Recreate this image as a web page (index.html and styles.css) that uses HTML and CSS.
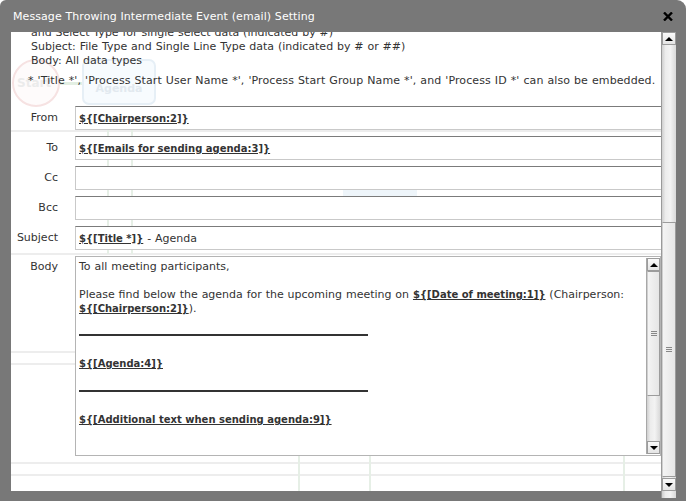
FILE: index.html
```html
<!DOCTYPE html>
<html>
<head>
<meta charset="utf-8">
<link rel="stylesheet" href="styles.css">
</head>
<body>
<div class="dialog">
  <div class="titlebar">
    <span class="title">Message Throwing Intermediate Event (email) Setting</span>
    <svg class="close" width="10" height="9" viewBox="0 0 10 9"><path d="M1 0.5 L9 8.5 M9 0.5 L1 8.5" stroke="#000" stroke-width="2.4" fill="none"/></svg>
  </div>
  <div class="content">
    <div class="main">
      <div class="backdrop">
        <div class="bd-circle"><span>Start</span></div>
        <div class="bd-arrow"></div>
        <div class="bd-box"><span>Agenda</span></div>
        <div class="bd-hline l1"></div>
        <div class="bd-hline l2"></div>
        <div class="bd-hline l3"></div>
        <div class="bd-hline l4"></div>
        <div class="bd-hline l5"></div>
        <div class="bd-hline l6"></div>
        <div class="bd-vline v1"></div>
        <div class="bd-vline v2"></div>
        <div class="bd-vline v3"></div>
        <div class="bd-vline v4"></div>
        <div class="bd-vline v5"></div>
        <div class="bd-minibox"></div>
      </div>
      <div class="scroller">
        <div class="help">
          <div class="help-line">and Select Type for single select data (indicated by #)</div>
          <div class="help-line">Subject: File Type and Single Line Type data (indicated by # or ##)</div>
          <div class="help-line">Body: All data types</div>
          <div class="help-note">* 'Title *', 'Process Start User Name *', 'Process Start Group Name *', and 'Process ID *' can also be embedded.</div>
        </div>
        <div class="form">
          <div class="label">From</div>
          <div class="field"><span class="token">${[Chairperson:2]}</span></div>
          <div class="label">To</div>
          <div class="field"><span class="token">${[Emails for sending agenda:3]}</span></div>
          <div class="label">Cc</div>
          <div class="field"></div>
          <div class="label">Bcc</div>
          <div class="field"></div>
          <div class="label">Subject</div>
          <div class="field"><span class="token">${[Title *]}</span>&nbsp;- Agenda</div>
          <div class="label label-top">Body</div>
          <div class="textarea">
            <div class="ta-text">
              <div class="ta-line">To all meeting participants,</div>
              <div class="ta-line">&nbsp;</div>
              <div class="ta-line">Please find below the agenda for the upcoming meeting on <span class="token">${[Date of meeting:1]}</span> (Chairperson:</div>
              <div class="ta-line"><span class="token">${[Chairperson:2]}</span>).</div>
              <div class="ta-rule"></div>
              <div class="ta-line"><span class="token">${[Agenda:4]}</span></div>
              <div class="ta-rule"></div>
              <div class="ta-line"><span class="token">${[Additional text when sending agenda:9]}</span></div>
            </div>
            <div class="sb inner">
              <div class="sb-btn"><span class="tri up"></span></div>
              <div class="sb-thumb"><span class="grip"></span></div>
              <div class="sb-fill"></div>
              <div class="sb-btn"><span class="tri down"></span></div>
            </div>
          </div>
        </div>
      </div>
    </div>
    <div class="sb outer">
      <div class="sb-btn"><span class="tri up"></span></div>
      <div class="sb-gap"></div>
      <div class="sb-thumb"><span class="grip"></span></div>
      <div class="sb-fill"></div>
      <div class="sb-btn"><span class="tri down"></span></div>
      <div class="sb-tail"></div>
    </div>
  </div>
</div>
</body>
</html>
```
FILE: styles.css
```css
* { box-sizing: border-box; }
body {
  margin: 0;
  background: #ffffff;
  font-family: "DejaVu Sans", Verdana, sans-serif;
  font-size: 11px;
  word-spacing: 0.37px;
  color: #333;
}
.dialog {
  width: 686px;
  height: 501px;
  background: #787878;
  border-radius: 6px 9px 0 0;
  display: flex;
  flex-direction: column;
  overflow: hidden;
}
.titlebar {
  height: 32px;
  flex: none;
  display: flex;
  align-items: center;
  justify-content: space-between;
  padding: 1px 13px 0 13px;
  color: #fff;
  font-size: 11px;
  word-spacing: 0.1px;
  letter-spacing: 0.08px;
}
.close { display: block; }
.content {
  display: flex;
  align-items: flex-start;
  padding: 0 10px 0 11px;
  height: 469px;
}
.main {
  width: 650px;
  height: 459px;
  flex: none;
  background: #fff;
  position: relative;
  overflow: hidden;
}
.backdrop { position: absolute; inset: 0; }
.bd-circle {
  position: absolute;
  left: 1px; top: 27px;
  width: 48px; height: 48px;
  border-radius: 50%;
  border: 2px solid #f6e2e2;
  background: #fefbfb;
  display: flex; align-items: center; justify-content: flex-start;
  padding-left: 3px;
  color: #ebebeb; font-weight: bold; font-size: 12px;
}
.bd-arrow {
  position: absolute;
  left: 49px; top: 50px;
  width: 22px; height: 3px;
  background: #e3efe3;
}
.bd-box {
  position: absolute;
  left: 71px; top: 27px;
  width: 74px; height: 46px;
  border: 2px solid #e6eff6;
  border-radius: 7px;
  background: #f7fbfe;
  display: flex; flex-direction: column; align-items: center; justify-content: flex-end;
  padding-bottom: 7px;
  color: #e2e9ef; font-weight: bold; font-size: 11px; line-height: 14px;
}
.bd-hline { position: absolute; left: 0; right: 0; height: 2px; background: #ededed; }
.bd-hline.l1 { top: 98px; }
.bd-hline.l2 { top: 221px; }
.bd-hline.l3 { top: 319px; }
.bd-hline.l4 { top: 331px; }
.bd-hline.l5 { top: 430px; }
.bd-hline.l6 { top: 442px; }
.bd-vline { position: absolute; width: 2px; background: #e6efe6; }
.bd-vline.v1 { left: 96px; top: 98px; height: 124px; }
.bd-vline.v2 { left: 120px; top: 98px; height: 124px; }
.bd-vline.v3 { left: 287px; top: 422px; height: 40px; }
.bd-vline.v4 { left: 358px; top: 422px; height: 40px; }
.bd-vline.v5 { left: 612px; top: 422px; height: 40px; }
.bd-minibox { position: absolute; left: 332px; top: 156px; width: 74px; height: 8px; background: #eef5fa; }

.scroller { position: relative; margin-top: -6px; }
.help { line-height: 14px; color: #333; }
.help-line { padding-left: 20px; }
.help-note { padding-left: 17px; margin-top: 6px; letter-spacing: 0.1px; white-space: nowrap; }

.form {
  display: grid;
  grid-template-columns: 47px 1fr;
  grid-auto-rows: 24px;
  column-gap: 17px;
  row-gap: 6px;
  margin-top: 18px;
  margin-right: -3px;
}
.label {
  text-align: right;
  align-self: center;
  line-height: 14px;
  color: #333;
}
.label-top { align-self: start; padding-top: 4px; }
.field {
  background: #fff;
  border: 1px solid #c9c9c9;
  border-top-color: #7b7b7b;
  display: flex;
  align-items: center;
  padding: 0 3px;
  white-space: nowrap;
}
.token { font-weight: bold; font-size: 10px; word-spacing: 0; text-decoration: underline; color: #333; }
.textarea {
  height: 200px;
  margin-right: 3px;
  background: #fff;
  border: 1px solid #b4b4b4;
  display: flex;
}
.ta-text {
  flex: 1;
  padding: 3px 3px 0 3px;
  line-height: 14px;
  white-space: nowrap;
}
.ta-rule { width: 289px; height: 2px; background: #333; margin: 18px 0 21px; }
.ta-rule + .ta-line + .ta-rule { margin-top: 19px; }

/* scrollbars */
.sb { display: flex; flex-direction: column; flex: none; }
.sb.outer { width: 15px; height: 466px; background: linear-gradient(to right, #cfcfcf, #ececec 25%, #f3f3f3 60%, #d9d9d9); border-left: 1px solid #9a9a9a; }
.sb.inner { width: 14px; margin: 1px 0 1px 0; background: linear-gradient(to right, #cfcfcf, #ececec 25%, #f3f3f3 60%, #d9d9d9); border-left: 1px solid #a8a8a8; }
.sb-btn {
  height: 13px; flex: none;
  background: linear-gradient(#fafafa, #e4e4e4);
  border: 1px solid #9c9c9c;
  display: flex; align-items: center; justify-content: center;
}
.tri { width: 0; height: 0; border-left: 4px solid transparent; border-right: 4px solid transparent; }
.tri.up { border-bottom: 4px solid #000; }
.tri.down { border-top: 4px solid #000; }
.sb-thumb {
  flex: none;
  border: 1px solid #9c9c9c;
  border-left-color: #cfcfcf;
  background: linear-gradient(to right, #f4f4f4, #e6e6e6);
  display: flex; align-items: center; justify-content: center;
}
.grip { width: 6px; height: 5px; background: repeating-linear-gradient(#888 0 1px, transparent 1px 2px); }
.sb-fill { flex: 1; }
.sb.outer .sb-gap { height: 177px; flex: none; }
.sb.outer .sb-thumb { height: 255px; }
.sb.outer .sb-tail { height: 7px; flex: none; }
.sb.inner .sb-thumb { height: 125px; }
```
